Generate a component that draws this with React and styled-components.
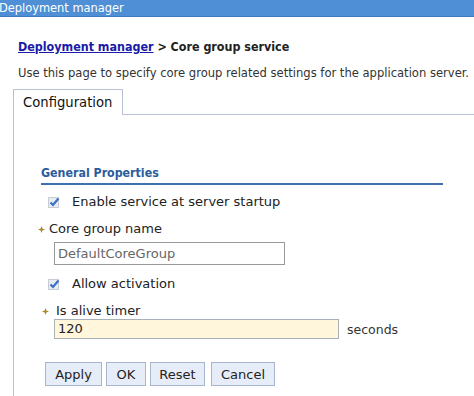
import React from "react";
import styled, { createGlobalStyle } from "styled-components";

const Global = createGlobalStyle`
  html, body { margin: 0; padding: 0; background: #fff; }
  body { font-family: "DejaVu Sans", "Liberation Sans", sans-serif; color: #222; }
`;

const condensed = `"DejaVu Sans Condensed", "DejaVu Sans", sans-serif`;

const Page = styled.div`
  width: 474px;
  height: 396px;
  overflow: hidden;
  background: #fff;
`;

const TitleBar = styled.div`
  height: 16px;
  background: #4f8fd5;
  color: #fff;
  font-family: ${condensed};
  font-size: 12.7px;
  line-height: 16px;
  border-bottom: 1px solid #3f78bd;
  text-indent: -1px;
  white-space: nowrap;
  overflow: hidden;
`;

const Content = styled.div`
  padding: 22px 0 0 18px;
`;

const Breadcrumb = styled.div`
  font-family: ${condensed};
  font-size: 12.4px;
  font-weight: bold;
  line-height: 16px;
  color: #222;
  a {
    color: #1a1aa8;
    text-decoration: underline;
  }
`;

const Description = styled.div`
  margin-top: 10px;
  font-family: ${condensed};
  font-size: 12.85px;
  line-height: 16px;
  color: #333;
  white-space: nowrap;
`;

const TabRow = styled.div`
  display: flex;
  margin: 8px 0 0 -5px;
  height: 26px;
`;

const Tab = styled.div`
  border: 1px solid #b8c2d4;
  border-bottom: none;
  padding: 0 10px 0 9px;
  font-size: 13.2px;
  line-height: 25px;
  color: #111;
  background: #fff;
`;

const TabFill = styled.div`
  flex: 1;
  border-bottom: 1px solid #b8c2d4;
`;

const Panel = styled.div`
  margin-left: -5px;
  border-left: 1px solid #b8c2d4;
  height: 300px;
  padding: 50px 0 0 27px;
`;

const Section = styled.div`
  width: 402px;
  font-family: ${condensed};
  font-size: 12.3px;
  font-weight: bold;
  color: #2b5c9c;
  line-height: 16px;
  padding-bottom: 2px;
  border-bottom: 2px solid #3e6fae;
`;

const CheckRow = styled.label`
  display: flex;
  align-items: center;
  gap: 12px;
  margin: ${(p) => p.$top}px 0 0 7px;
  font-size: 13px;
  line-height: 16px;
  color: #222;
`;

const FieldLabel = styled.div`
  display: flex;
  align-items: center;
  gap: ${(p) => p.$gap}px;
  margin: ${(p) => p.$top}px 0 0 ${(p) => p.$left}px;
  font-size: 13px;
  line-height: 16px;
  color: #222;
`;

const InputRow = styled.div`
  display: flex;
  align-items: center;
  gap: 8px;
  margin: ${(p) => p.$top}px 0 0 13px;
  font-size: 12.5px;
  color: #333;
`;

const TextBox = styled.div`
  box-sizing: border-box;
  width: ${(p) => p.$w}px;
  height: ${(p) => p.$h}px;
  border: 1px solid ${(p) => (p.$warm ? "#aab0b8" : "#999")};
  background: ${(p) => (p.$warm ? "#fff6dc" : "#fff")};
  color: ${(p) => (p.$warm ? "#222" : "#666")};
  font-size: 13px;
  line-height: ${(p) => p.$h - 2}px;
  padding-left: 3px;
`;

const Buttons = styled.div`
  display: flex;
  margin: 23px 0 0 4px;
`;

const Button = styled.button`
  box-sizing: border-box;
  width: ${(p) => p.$w}px;
  height: 24px;
  margin-right: ${(p) => p.$gap || 0}px;
  padding: 0;
  border: 1px solid #a7b6cc;
  background: #e6edf8;
  color: #222;
  font-family: "DejaVu Sans", sans-serif;
  font-size: 13px;
`;

const Check = () => (
  <svg width="12" height="12" viewBox="0 0 12 12">
    <rect x="0.5" y="1.5" width="10" height="10" fill="#e9ecf2" stroke="#c8ccd6" />
    <path d="M2.5 6.5 L5 9 L10.5 2.5" fill="none" stroke="#3a6fc4" strokeWidth="2.2" />
  </svg>
);

const Req = () => (
  <svg width="7" height="7" viewBox="0 0 7 7">
    <path d="M3.5 0 L4.4 2.6 L7 3.5 L4.4 4.4 L3.5 7 L2.6 4.4 L0 3.5 L2.6 2.6 Z" fill="#a88a2a" />
  </svg>
);

export default function App() {
  return (
    <Page>
      <Global />
      <TitleBar>Deployment manager</TitleBar>
      <Content>
        <Breadcrumb>
          <a href="#">Deployment manager</a> &gt; Core group service
        </Breadcrumb>
        <Description>
          Use this page to specify core group related settings for the application server.
        </Description>
        <TabRow>
          <Tab>Configuration</Tab>
          <TabFill />
        </TabRow>
        <Panel>
          <Section>General Properties</Section>
          <CheckRow $top={9}>
            <Check />
            Enable service at server startup
          </CheckRow>
          <FieldLabel $top={11} $left={-3} $gap={4}>
            <Req />
            Core group name
          </FieldLabel>
          <InputRow $top={5}>
            <TextBox $w={231} $h={23}>DefaultCoreGroup</TextBox>
          </InputRow>
          <CheckRow $top={11}>
            <Check />
            Allow activation
          </CheckRow>
          <FieldLabel $top={11} $left={1} $gap={7}>
            <Req />
            Is alive timer
          </FieldLabel>
          <InputRow $top={0}>
            <TextBox $w={285} $h={20} $warm>120</TextBox>
            seconds
          </InputRow>
          <Buttons>
            <Button $w={57} $gap={4}>Apply</Button>
            <Button $w={40} $gap={4}>OK</Button>
            <Button $w={55} $gap={6}>Reset</Button>
            <Button $w={64}>Cancel</Button>
          </Buttons>
        </Panel>
      </Content>
    </Page>
  );
}
